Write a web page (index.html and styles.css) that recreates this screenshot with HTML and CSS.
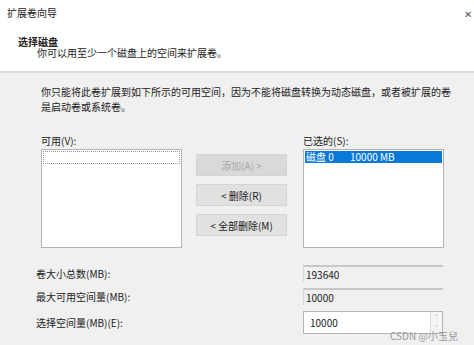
FILE: index.html
```html
<!DOCTYPE html>
<html lang="zh-CN">
<head>
    <meta charset="UTF-8">
    <meta name="viewport" content="width=device-width, initial-scale=1.0">
    <title>扩展卷向导</title>
    <link rel="stylesheet" href="styles.css">
</head>
<body>
    <div class="wizard">
        <div class="header">
            <div class="titlebar">
                <span class="title">扩展卷向导</span>
                <span class="close">✕</span>
            </div>
            <div class="step-title">选择磁盘</div>
            <div class="step-desc">你可以用至少一个磁盘上的空间来扩展卷。</div>
        </div>

        <div class="content">
            <p class="note">你只能将此卷扩展到如下所示的可用空间，因为不能将磁盘转换为动态磁盘，或者被扩展的卷是启动卷或系统卷。</p>

            <div class="lists">
                <div class="list-col">
                    <label class="list-label">可用(V):</label>
                    <div class="listbox">
                        <div class="focus-row"></div>
                    </div>
                </div>

                <div class="buttons">
                    <button class="btn" disabled>添加(A) &gt;</button>
                    <button class="btn">&lt; 删除(R)</button>
                    <button class="btn">&lt; 全部删除(M)</button>
                </div>

                <div class="list-col">
                    <label class="list-label">已选的(S):</label>
                    <div class="listbox">
                        <div class="item selected"><span class="disk">磁盘 0</span><span>10000 MB</span></div>
                    </div>
                </div>
            </div>

            <div class="fields">
                <div class="field-row">
                    <span class="field-label">卷大小总数(MB):</span>
                    <div class="field readonly">193640</div>
                </div>
                <div class="field-row">
                    <span class="field-label">最大可用空间量(MB):</span>
                    <div class="field readonly">10000</div>
                </div>
                <div class="field-row">
                    <span class="field-label">选择空间量(MB)(E):</span>
                    <div class="field spin">
                        <span class="spin-value">10000</span>
                        <span class="spin-btns">
                            <span class="arrow">˄</span>
                            <span class="arrow">˅</span>
                        </span>
                    </div>
                </div>
            </div>
        </div>

        <span class="watermark">CSDN @小玉兒</span>
    </div>
</body>
</html>
```

FILE: styles.css
```css
body {
    margin: 0;
    font-family: "Noto Sans CJK SC", "Noto Sans", sans-serif;
    font-size: 10px;
    color: #222;
    background: #f0f0f0;
}
.wizard {
    position: relative;
    width: 474px;
    height: 345px;
    overflow: hidden;
}
.header {
    height: 71px;
    background: #fff;
    border-bottom: 2px solid #dcdcdc;
}
.titlebar {
    display: flex;
    justify-content: space-between;
    align-items: center;
    height: 14px;
    padding: 6px 2px 0 7px;
}
.title {
    line-height: 14px;
}
.close {
    font-size: 10px;
    color: #555;
}
.step-title {
    font-weight: bold;
    line-height: 11px;
    margin: 16px 0 0 18px;
}
.step-desc {
    line-height: 12px;
    margin-left: 37px;
}
.content {
    padding: 11px 0 0 41px;
}
.note {
    margin: 0;
    width: 414px;
    line-height: 15px;
}
.lists {
    display: flex;
    margin-top: 20px;
}
.list-col {
    display: flex;
    flex-direction: column;
}
.list-label {
    line-height: 14px;
    margin-bottom: 1px;
}
.listbox {
    width: 139px;
    height: 97px;
    background: #fff;
    border: 1px solid #b4b4b4;
}
.focus-row {
    height: 11px;
    margin: 1px;
    border: 1px dotted #999;
}
.item {
    display: flex;
    height: 12px;
    line-height: 12px;
    margin: 1px;
    padding-left: 1px;
}
.item.selected {
    background: #0a78d7;
    color: #fff;
}
.disk {
    width: 44px;
}
.buttons {
    display: flex;
    flex-direction: column;
    gap: 8px;
    margin: 20px 16px 0 14px;
}
.btn {
    width: 91px;
    height: 22px;
    padding: 0;
    font-family: inherit;
    font-size: 10px;
    color: #222;
    background: #e1e1e1;
    border: 1px solid #d4d4d4;
}
.btn:disabled {
    color: #a8a8a8;
    background: #d9d9d9;
    border-color: #d4d4d4;
}
.fields {
    display: flex;
    flex-direction: column;
    gap: 6px;
    margin: 17px 0 0 -5px;
}
.field-row {
    display: flex;
    align-items: center;
}
.field-label {
    width: 267px;
}
.field {
    width: 140px;
    box-sizing: border-box;
    padding-left: 2px;
}
.field.readonly {
    height: 17px;
    line-height: 15px;
    background: #f0f0f0;
    border-top: 2px solid #c8c8c8;
    border-left: 1px solid #d8d8d8;
}
.field.spin {
    display: flex;
    justify-content: space-between;
    height: 23px;
    line-height: 21px;
    background: #fff;
    border: 1px solid #b4b4b4;
    padding-left: 6px;
}
.spin-btns {
    display: flex;
    flex-direction: column;
    width: 11px;
    border-left: 1px solid #ddd;
}
.arrow {
    flex: 1;
    font-size: 7px;
    line-height: 10px;
    text-align: center;
    color: #444;
    background: #f4f4f4;
}
.watermark {
    position: absolute;
    left: 390px;
    top: 328px;
    font-size: 10px;
    color: #9a9a9a;
}
```
